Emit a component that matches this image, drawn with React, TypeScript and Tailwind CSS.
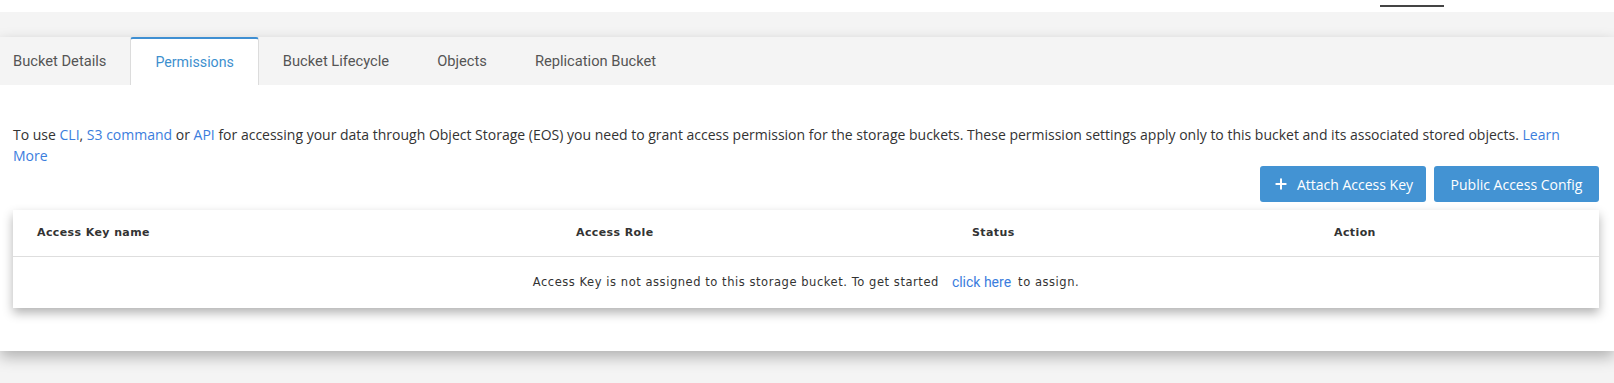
import { Plus } from 'lucide-react'

const tabs = ['Bucket Details', 'Permissions', 'Bucket Lifecycle', 'Objects', 'Replication Bucket']

export default function App() {
  const active = 'Permissions'

  return (
    <div className="min-h-[383px] bg-[#f4f4f4] font-['Open_Sans',sans-serif]">
      {/* top header strip */}
      <div className="h-3 bg-white">
        <div className="ml-[1380px] pt-[5px]">
          <div className="h-[2px] w-[64px] bg-[#444]" />
        </div>
      </div>

      <div className="mt-[25px] bg-white shadow-[0_6px_14px_rgba(0,0,0,0.28)]">
        {/* tabs */}
        <div className="flex h-[48px] bg-[#f4f4f4] font-['Roboto',sans-serif] text-[14.7px]">
          {tabs.map((t, i) => {
            const isActive = t === active
            return (
              <div
                key={t}
                className={
                  isActive
                    ? 'flex items-center rounded-t-[3px] border-x border-t-2 border-x-[#dcdcdc] border-t-[#3f8fd2] bg-white px-6 pt-[2px] text-[14.2px] text-[#3d8fce]'
                    : i === 0
                      ? 'flex items-center pl-[13px] pr-6 text-[#555]'
                      : 'flex items-center px-6 text-[#555]'
                }
              >
                {t}
              </div>
            )
          })}
        </div>

        {/* content */}
        <div className="pb-[43px] pl-[13px] pr-[15px] pt-[39px]">
          <p className="mr-[6px] text-[14px] leading-[21px] text-[#333]">
            To use <span className="text-[#3b7ddd]">CLI</span>, <span className="text-[#3b7ddd]">S3 command</span> or{' '}
            <span className="text-[#3b7ddd]">API</span> for accessing your data through Object Storage (EOS) you need
            to grant access permission for the storage buckets. These permission settings apply only to this bucket and
            its associated stored objects. <span className="text-[#3b7ddd]">Learn More</span>
          </p>

          <div className="flex justify-end gap-2">
            <button className="flex h-9 w-[166px] items-center justify-center gap-2 rounded-[3px] bg-[#4393d3] text-[14px] text-white">
              <Plus className="h-4 w-4" strokeWidth={3} />
              Attach Access Key
            </button>
            <button className="flex h-9 w-[165px] items-center justify-center rounded-[3px] bg-[#4393d3] text-[14px] text-white">
              Public Access Config
            </button>
          </div>

          {/* table */}
          <div className="mt-2 bg-white font-['DejaVu_Sans',sans-serif] shadow-[0_5px_10px_rgba(0,0,0,0.3)]">
            <div className="grid h-[47px] grid-cols-[563px_396px_362px_1fr] items-center border-b border-[#dedede] text-[11px] font-bold tracking-[0.4px] text-[#333]">
              <div className="pl-[24px]">Access Key name</div>
              <div>Access Role</div>
              <div>Status</div>
              <div>Action</div>
            </div>
            <div className="flex h-[51px] items-center justify-center text-[11.5px] tracking-[0.55px] text-[#333]">
              Access Key is not assigned to this storage bucket. To get started
              <span className="ml-[13px] mr-[7px] font-['Roboto',sans-serif] text-[14px] tracking-normal text-[#3b7ddd]">
                click here
              </span>
              to assign.
            </div>
          </div>
        </div>
      </div>
    </div>
  )
}
